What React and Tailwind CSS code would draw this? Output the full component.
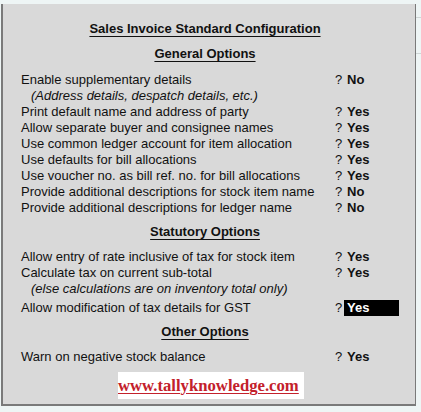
import React from 'react';

const Heading = ({ children, className = '' }) => (
  <div className={`flex h-4 items-center justify-center pr-[8px] ${className}`}>
    <span className="font-bold text-[13px] leading-4 underline underline-offset-[3px] decoration-1">{children}</span>
  </div>
);

const Row = ({ label, value, active, className = '' }) => (
  <div className={`flex h-4 items-center text-[13px] leading-4 ${className}`}>
    <span className="w-[314px] shrink-0">{label}</span>
    <span className="w-[9px] shrink-0">?</span>
    <span
      className={`h-4 w-[55px] pl-[3px] font-bold ${active ? 'bg-black text-white' : ''}`}
    >
      {value}
    </span>
  </div>
);

const Note = ({ children }) => (
  <div className="h-4 pl-[10px] text-[13px] italic leading-4">{children}</div>
);

export default function App() {
  const general = [
    ['Print default name and address of party', 'Yes'],
    ['Allow separate buyer and consignee names', 'Yes'],
    ['Use common ledger account for item allocation', 'Yes'],
    ['Use defaults for bill allocations', 'Yes'],
    ['Use voucher no. as bill ref. no. for bill allocations', 'Yes'],
    ['Provide additional descriptions for stock item name', 'No'],
    ['Provide additional descriptions for ledger name', 'No'],
  ];

  return (
    <div className="relative h-[412px] w-[421px] overflow-hidden bg-[#eef5f5] pt-[4px] pl-[1px] font-['Liberation_Sans',Arial,sans-serif] text-[#111]">
      {/* faint lines of the window behind */}
      <div className="absolute right-0 top-[17px] h-px w-[5px] bg-[#cfd6d6]" />
      <div className="absolute right-0 top-[53px] h-px w-[5px] bg-[#cfd6d6]" />

      <div className="h-[402px] w-[415px] border-b-2 border-l-2 border-r border-[#7a7a7a] bg-[#d9d9d9] pt-[17px]">
        <Heading>Sales Invoice Standard Configuration</Heading>
        <Heading className="mt-[9px]">General Options</Heading>

        <div className="mt-[10px] pl-[18px]">
          <Row label="Enable supplementary details" value="No" />
          <Note>(Address details, despatch details, etc.)</Note>
          {general.map(([label, value]) => (
            <Row key={label} label={label} value={value} />
          ))}
        </div>

        <Heading className="mt-[8px]">Statutory Options</Heading>

        <div className="mt-[9px] pl-[18px]">
          <Row label="Allow entry of rate inclusive of tax for stock item" value="Yes" />
          <Row label="Calculate tax on current sub-total" value="Yes" />
          <Note>(else calculations are on inventory total only)</Note>
          <Row className="mt-[3px]" label="Allow modification of tax details for GST" value="Yes" active />
        </div>

        <Heading className="mt-[8px]">Other Options</Heading>

        <div className="mt-[9px] pl-[18px]">
          <Row label="Warn on negative stock balance" value="Yes" />
        </div>

        <div className="mt-[7px] ml-[115px] flex h-[27px] w-[186px] items-center bg-white">
          <span className="font-['Liberation_Serif','Times_New_Roman',serif] text-[16.7px] font-bold leading-5 text-[#c3202b] underline underline-offset-2 decoration-1">
            www.tallyknowledge.com
          </span>
        </div>
      </div>
    </div>
  );
}
